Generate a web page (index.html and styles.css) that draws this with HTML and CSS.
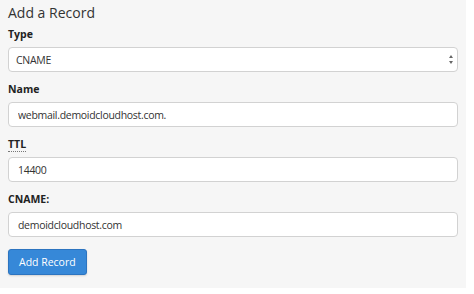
FILE: index.html
```html
<!DOCTYPE html>
<html lang="en">
<head>
    <meta charset="UTF-8">
    <title>Add a Record</title>
    <link rel="stylesheet" href="styles.css">
</head>
<body>
    <div class="panel">
        <h3 class="title">Add a Record</h3>
        <form class="record-form">
            <div class="form-group">
                <label for="type">Type</label>
                <div class="select-wrap">
                    <select id="type" class="form-control">
                        <option>CNAME</option>
                        <option>A</option>
                        <option>TXT</option>
                    </select>
                    <span class="arrows"></span>
                </div>
            </div>
            <div class="form-group">
                <label for="name">Name</label>
                <input id="name" class="form-control" type="text" value="webmail.demoidcloudhost.com.">
            </div>
            <div class="form-group">
                <label for="ttl"><abbr title="Time To Live">TTL</abbr></label>
                <input id="ttl" class="form-control" type="text" value="14400">
            </div>
            <div class="form-group">
                <label for="cname">CNAME:</label>
                <input id="cname" class="form-control" type="text" value="demoidcloudhost.com">
            </div>
            <button type="button" class="btn-primary">Add Record</button>
        </form>
    </div>
</body>
</html>
```

FILE: styles.css
```css
body {
    margin: 0;
    background: #fff;
    font-family: "Open Sans", "Liberation Sans", sans-serif;
    color: #333;
}
.panel {
    width: 450px;
    height: 288px;
    padding: 0 8px;
    background: #f6f6f6;
}
.title {
    margin: 0;
    padding-top: 3px;
    font-size: 14px;
    line-height: 20px;
    font-weight: 400;
}
.record-form {
    margin-top: 4px;
}
.form-group {
    margin-bottom: 10px;
}
.form-group label {
    display: block;
    margin-bottom: 5px;
    font-size: 10.5px;
    line-height: 15px;
    font-weight: 700;
    color: #222;
}
abbr[title] {
    text-decoration: none;
    border-bottom: 1px dotted #777;
}
.form-control {
    display: block;
    box-sizing: border-box;
    width: 100%;
    height: 25px;
    margin: 0;
    padding: 0 9px;
    border: 1px solid #d2d2d2;
    border-radius: 4px;
    background: #fff;
    font-family: inherit;
    font-size: 10.5px;
    letter-spacing: -0.3px;
    color: #333;
    outline: none;
}

/* select box with custom up/down arrows */
.select-wrap {
    position: relative;
}
.select-wrap select {
    appearance: none;
    -webkit-appearance: none;
    padding-left: 7px;
}
.arrows {
    position: absolute;
    top: 8px;
    right: 7px;
    width: 0;
    height: 9px;
}
.arrows::before,
.arrows::after {
    content: "";
    position: absolute;
    left: -2.5px;
    border-left: 2.5px solid transparent;
    border-right: 2.5px solid transparent;
}
.arrows::before {
    top: 0;
    border-bottom: 3.5px solid #666;
}
.arrows::after {
    bottom: 0;
    border-top: 3.5px solid #666;
}

.btn-primary {
    height: 26px;
    margin-top: 2px;
    padding: 0 10px;
    border: 1px solid #2c74c0;
    border-radius: 3px;
    background: #3688d8;
    color: #fff;
    font-family: inherit;
    font-size: 10.5px;
    box-shadow: 0 1px 2px rgba(0,0,0,.15);
}
```
